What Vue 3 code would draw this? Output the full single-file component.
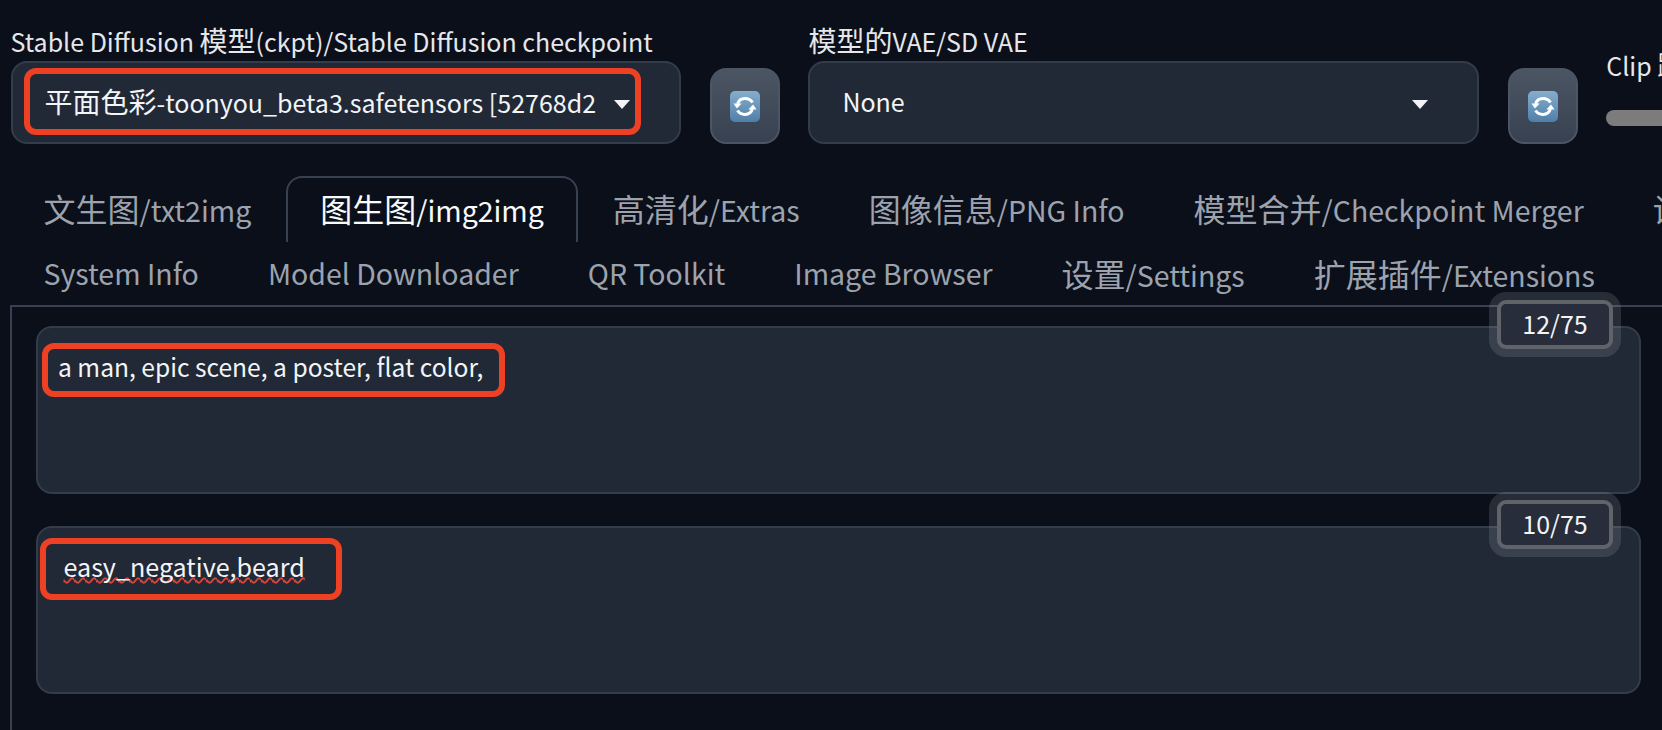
<script setup>
const firstTabs = [
  { label: '文生图/txt2img' },
  { label: '图生图/img2img', active: true },
  { label: '高清化/Extras' },
  { label: '图像信息/PNG Info' },
  { label: '模型合并/Checkpoint Merger' },
  { label: '设置/Settings' }
]
const secondTabs = ['System Info', 'Model Downloader', 'QR Toolkit', 'Image Browser', '设置/Settings', '扩展插件/Extensions']

// Latin and Chinese runs take different sizes, as Source Sans with a CJK fallback does.
function runs(text) {
  return text.match(/[\u4e00-\u9fff]+|[^\u4e00-\u9fff]+/g).map((part) => ({
    part,
    cjk: /[\u4e00-\u9fff]/.test(part)
  }))
}
</script>

<template>
  <div class="page">
    <div class="top">
      <div class="field">
        <div class="label">
          <span v-for="r in runs('Stable Diffusion 模型(ckpt)/Stable Diffusion checkpoint')" :key="r.part" :class="{ cjk: r.cjk }">{{ r.part }}</span>
        </div>
        <div class="select">
          <span class="value">
            <span v-for="r in runs('平面色彩-toonyou_beta3.safetensors [52768d2')" :key="r.part" :class="{ cjk: r.cjk }">{{ r.part }}</span>
          </span>
          <span class="arrow"></span>
          <span class="mark mark-model"></span>
        </div>
      </div>
      <button class="refresh" type="button" aria-label="refresh">
        <svg class="refresh-icon" viewBox="0 0 30 31" width="30" height="31">
          <defs>
            <linearGradient id="tile" x1="0" y1="0" x2="0" y2="1">
              <stop offset="0" stop-color="#86aecd" />
              <stop offset="1" stop-color="#4f7fa9" />
            </linearGradient>
          </defs>
          <rect width="30" height="31" rx="5" fill="url(#tile)" />
          <path d="M22.5 11.5C20.5 8.6 17.8 7.6 15 7.6c-3.600 0-6.400 2.200-7.300 5.400" fill="none" stroke="#fff" stroke-width="3" />
          <path d="M3.500 12.500h8.200l-4.800 5z" fill="#fff" />
          <path d="M7.500 19.500c2 2.900 4.700 3.900 7.500 3.900 3.600 0 6.400-2.200 7.300-5.400" fill="none" stroke="#fff" stroke-width="3" />
          <path d="M26.500 18.500h-8.200l4.800-5z" fill="#fff" />
        </svg>
      </button>
      <div class="field">
        <div class="label">
          <span v-for="r in runs('模型的VAE/SD VAE')" :key="r.part" :class="{ cjk: r.cjk }">{{ r.part }}</span>
        </div>
        <div class="select">
          <span class="value">None</span>
          <span class="arrow"></span>
        </div>
      </div>
      <button class="refresh" type="button" aria-label="refresh">
        <svg class="refresh-icon" viewBox="0 0 30 31" width="30" height="31">
          <rect width="30" height="31" rx="5" fill="url(#tile)" />
          <path d="M22.5 11.5C20.5 8.6 17.8 7.6 15 7.6c-3.600 0-6.400 2.200-7.300 5.400" fill="none" stroke="#fff" stroke-width="3" />
          <path d="M3.500 12.500h8.200l-4.800 5z" fill="#fff" />
          <path d="M7.500 19.500c2 2.900 4.700 3.900 7.500 3.900 3.600 0 6.400-2.200 7.300-5.400" fill="none" stroke="#fff" stroke-width="3" />
          <path d="M26.500 18.500h-8.200l4.800-5z" fill="#fff" />
        </svg>
      </button>
      <div class="clip">
        <div class="label">
          <span v-for="r in runs('Clip 跳过层/Clip skip')" :key="r.part" :class="{ cjk: r.cjk }">{{ r.part }}</span>
        </div>
        <div class="slider"></div>
      </div>
    </div>

    <div class="tabs tabs-first">
      <div v-for="tab in firstTabs" :key="tab.label" class="tab" :class="{ active: tab.active }">
        <span v-for="r in runs(tab.label)" :key="r.part" :class="{ 'cjk-tab': r.cjk }">{{ r.part }}</span>
      </div>
    </div>
    <div class="tabs tabs-second">
      <div v-for="tab in secondTabs" :key="tab" class="tab">
        <span v-for="r in runs(tab)" :key="r.part" :class="{ 'cjk-tab': r.cjk }">{{ r.part }}</span>
      </div>
    </div>

    <div class="panel">
      <div class="prompt">
        <div class="text">a man, epic scene, a poster, flat color,</div>
        <div class="counter">12/75</div>
        <span class="mark mark-prompt"></span>
      </div>
      <div class="prompt">
        <div class="text text-negative"><span class="misspelled">easy_negative,beard</span></div>
        <div class="counter">10/75</div>
        <span class="mark mark-negative"></span>
      </div>
    </div>
  </div>
</template>

<style>
html,
body {
  margin: 0;
  background: #0b0f19;
}
</style>

<style scoped>
.page {
  width: 1662px;
  height: 730px;
  overflow: hidden;
  background: #0b0f19;
  color: #f3f4f6;
  font-family: "Noto Sans CJK SC", "Noto Sans", sans-serif;
}
.top {
  display: flex;
  align-items: flex-start;
  gap: 28.7px;
  height: 148px;
  padding: 28px 0 0 10.5px;
  box-sizing: content-box;
  white-space: nowrap;
}
.field {
  flex: 0 0 670.5px;
  display: flex;
  flex-direction: column;
}
.cjk {
  font-size: 28px;
}
.cjk-tab {
  font-size: 32px;
}
.label {
  height: 33px;
  line-height: 25px;
  font-size: 25px;
  color: #e5e7eb;
}
.select {
  position: relative;
  display: flex;
  align-items: center;
  justify-content: space-between;
  box-sizing: border-box;
  height: 83px;
  padding: 0 51px 4px 34px;
  background: #222936;
  border: 2px solid #333c4b;
  border-radius: 16px;
  font-size: 25px;
}
.value {
  margin-left: -2px;
  color: #f3f4f6;
}
.arrow {
  width: 0;
  height: 0;
  border-left: 8px solid transparent;
  border-right: 8px solid transparent;
  border-top: 9px solid #f3f4f6;
  margin: 8px -2px 0 0;
}
.refresh {
  flex: 0 0 70px;
  display: flex;
  align-items: center;
  justify-content: center;
  width: 70px;
  height: 76px;
  margin-top: 40px;
  padding: 0;
  background: linear-gradient(to bottom, #4b5563, #374151);
  border: 2px solid #4b5563;
  border-radius: 16px;
}
.clip {
  flex: 0 0 auto;
  padding-top: 24px;
}
.slider {
  width: 200px;
  height: 16px;
  margin-top: 25px;
  background: #7c7c7c;
  border-radius: 8px;
}
.tabs {
  display: flex;
  padding-left: 9px;
  white-space: nowrap;
  color: #9ca3af;
  font-size: 28.5px;
}
.tab {
  flex: 0 0 auto;
  box-sizing: border-box;
  padding: 0 32.5px;
  border: 2px solid transparent;
  border-bottom: 0;
}
.tabs-first .tab {
  height: 66px;
  line-height: 60px;
}
.tabs-second {
  margin-top: 1px;
}
.tabs-second .tab {
  height: 62px;
  line-height: 56px;
}
.tab.active {
  color: #f9fafb;
  border-color: #374151;
  border-radius: 16px 16px 0 0;
}
.panel {
  box-sizing: border-box;
  height: 425px;
  margin-left: 10px;
  padding: 19px 21px 0 24px;
  border-left: 2px solid #374151;
  border-top: 2px solid #374151;
  display: flex;
  flex-direction: column;
  gap: 32px;
}
.prompt {
  position: relative;
  box-sizing: border-box;
  height: 168px;
  background: #222936;
  border: 2px solid #333c4b;
  border-radius: 16px;
}
.text {
  padding: 20px 0 0 20px;
  font-size: 24.6px;
  line-height: 36px;
  color: #f3f4f6;
}
.text-negative {
  padding: 20px 0 0 25.5px;
  font-size: 25.1px;
}
.misspelled {
  text-decoration: underline wavy #d8443a 2px;
  text-decoration-skip-ink: none;
  text-underline-offset: 0;
}
.counter {
  position: absolute;
  top: -28px;
  right: 26px;
  box-sizing: border-box;
  width: 116px;
  height: 49px;
  line-height: 39px;
  text-align: center;
  font-size: 25px;
  color: #f3f4f6;
  background: #272d3a;
  border: 4px solid #606469;
  border-radius: 9px;
  box-shadow: 0 0 0 8px rgba(156, 163, 175, 0.2);
}
.mark {
  position: absolute;
  box-sizing: border-box;
  border: 6px solid #ee4023;
  border-radius: 12px;
  pointer-events: none;
}
.mark-model {
  left: 11px;
  top: 5px;
  width: 617px;
  height: 67px;
}
.mark-prompt {
  left: 4px;
  top: 15px;
  width: 463px;
  height: 54px;
}
.mark-negative {
  left: 2px;
  top: 10px;
  width: 302px;
  height: 62px;
}
</style>
